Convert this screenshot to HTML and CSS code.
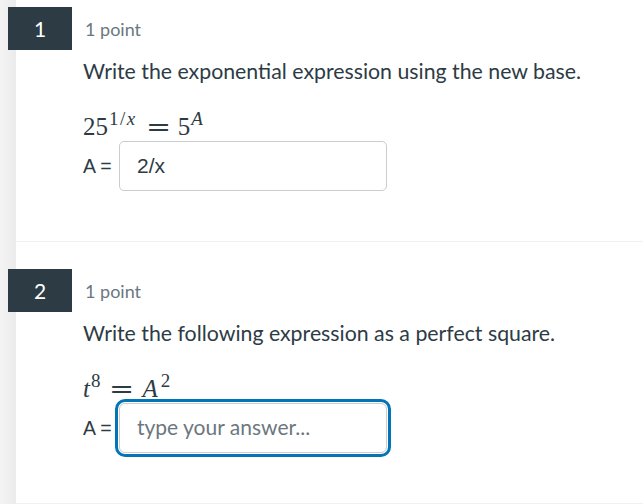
FILE: index.html
```html
<!DOCTYPE html>
<html lang="en">
<head>
    <meta charset="UTF-8">
    <meta name="viewport" content="width=device-width, initial-scale=1.0">
    <title>Quiz</title>
    <link rel="stylesheet" href="styles.css">
</head>
<body>
    <div class="quiz">
        <div class="question">
            <div class="question-header">
                <div class="number">1</div>
                <div class="points">1 point</div>
            </div>
            <div class="question-body">
                <p class="question-text">Write the exponential expression using the new base.</p>
                <div class="math">
                    <span>25</span><sup class="sup frac">1/<i>x</i></sup><span class="eq">=</span><span>5</span><sup class="sup"><i>A</i></sup>
                </div>
                <div class="answer">
                    <label for="ans1">A =</label>
                    <input type="text" id="ans1" value="2/x">
                </div>
            </div>
        </div>

        <div class="question">
            <div class="question-header">
                <div class="number">2</div>
                <div class="points">1 point</div>
            </div>
            <div class="question-body">
                <p class="question-text">Write the following expression as a perfect square.</p>
                <div class="math">
                    <i>t</i><sup class="sup">8</sup><span class="eq">=</span><i class="var-a">A</i><sup class="sup">2</sup>
                </div>
                <div class="answer">
                    <label for="ans2">A =</label>
                    <input type="text" id="ans2" class="focused" placeholder="type your answer...">
                </div>
            </div>
        </div>
    </div>
</body>
</html>
```

FILE: styles.css
```css
body {
    margin: 0;
    font-family: Lato, sans-serif;
    color: #2d3b45;
    background: linear-gradient(to right, #f4f4f4, #ebebeb) left top / 16px 100% no-repeat, #fff;
    overflow: hidden;
}
.quiz {
    margin-left: 16px;
    margin-top: -20px;
}
.question {
    padding: 27px 0 50px 0;
    border-bottom: 1px solid #f0f0f0;
}
.question-header {
    display: flex;
    align-items: center;
    margin-left: -8px;
}
.number {
    width: 64px;
    height: 43px;
    background-color: #2d3b45;
    color: #fff;
    font-size: 21px;
    display: flex;
    align-items: center;
    justify-content: center;
}
.points {
    margin-left: 13px;
    font-size: 18px;
    color: #6b7780;
}
.question-body {
    padding-left: 67px;
}
.question-text {
    margin: 7px 0 0 0;
    font-size: 21.3px;
    line-height: 28px;
}
.math {
    margin-top: 27px;
    height: 29px;
    font-family: "Liberation Serif", serif;
    font-size: 25px;
    line-height: 29px;
}
.math .sup {
    font-size: 19px;
    vertical-align: 10px;
    line-height: 0;
    margin-left: 1px;
}
.math .frac {
    letter-spacing: 1.5px;
}
.math .eq {
    display: inline-block;
    font-family: "DejaVu Serif", serif;
    transform: scaleX(1.2);
    margin: 0 9px 0 11px;
}
.math .var-a {
    margin-left: 1px;
    letter-spacing: 2px;
}
.answer {
    display: flex;
    align-items: center;
}
.answer label {
    width: 36px;
    font-family: "Liberation Sans", sans-serif;
    font-size: 19.5px;
}
.answer input {
    width: 268px;
    height: 50px;
    box-sizing: border-box;
    border: 1px solid #c7cdd1;
    border-radius: 5px;
    padding: 0 17px;
    font-family: "Liberation Sans", sans-serif;
    font-size: 21px;
    color: #2d3b45;
}
.answer input::placeholder {
    font-family: Lato, sans-serif;
    font-size: 21px;
    color: #6b7780;
}
.answer input.focused {
    outline: 3px solid #0374b5;
    outline-offset: 1px;
    border-radius: 6px;
}
```
